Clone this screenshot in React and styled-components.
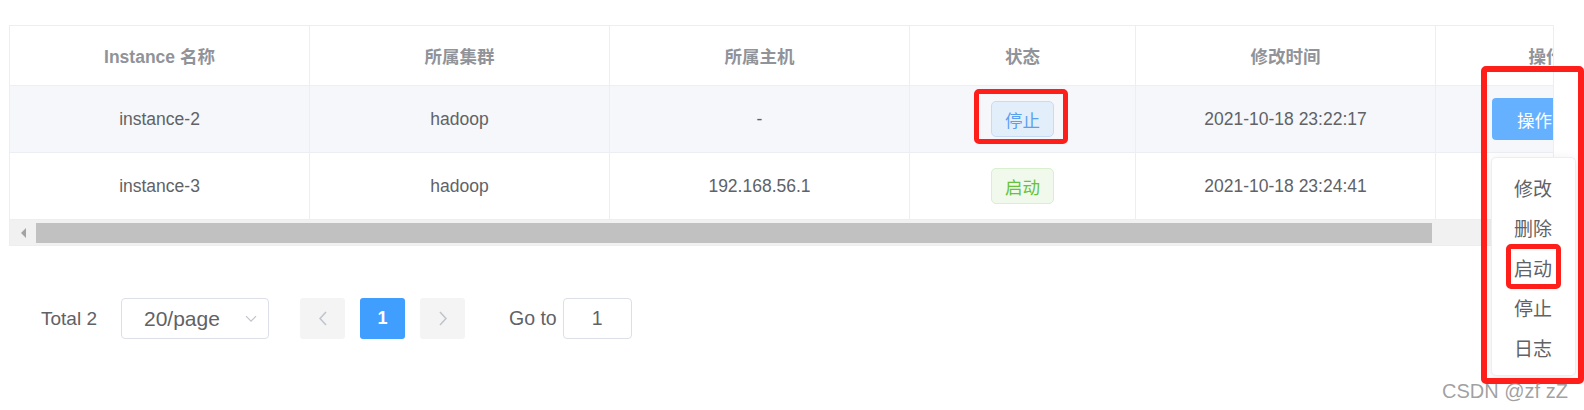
import React from 'react';
import styled, { createGlobalStyle } from 'styled-components';

const columns = [
  { key: 'name', title: 'Instance 名称', width: 300 },
  { key: 'cluster', title: '所属集群', width: 300 },
  { key: 'host', title: '所属主机', width: 300 },
  { key: 'status', title: '状态', width: 226 },
  { key: 'time', title: '修改时间', width: 300 },
  { key: 'op', title: '操作', width: 221 },
];

const rows = [
  { name: 'instance-2', cluster: 'hadoop', host: '-', status: 'stop', time: '2021-10-18 23:22:17', hover: true },
  { name: 'instance-3', cluster: 'hadoop', host: '192.168.56.1', status: 'run', time: '2021-10-18 23:24:41' },
];

const menuItems = ['修改', '删除', '启动', '停止', '日志'];

function ChevronDown({ size = 12 }) {
  return (
    <svg width={size} height={size * 0.6} viewBox="0 0 12 7" fill="none">
      <polyline points="1,1 6,6 11,1" stroke="currentColor" strokeWidth="1.2" />
    </svg>
  );
}

function Chevron({ dir }) {
  const pts = dir === 'left' ? '7,1 1,7.5 7,14' : '1,1 7,7.5 1,14';
  return (
    <svg width="8" height="15" viewBox="0 0 8 15" fill="none">
      <polyline points={pts} stroke="currentColor" strokeWidth="1.6" />
    </svg>
  );
}

function App() {
  return (
    <Page>
      <GlobalStyle />
      <TableWrap>
        <Grid>
          {columns.map((c) => (
            <HeadCell key={c.key}>{c.title}</HeadCell>
          ))}
          {rows.map((r) => (
            <React.Fragment key={r.name}>
              <Cell $hover={r.hover}>{r.name}</Cell>
              <Cell $hover={r.hover}>{r.cluster}</Cell>
              <Cell $hover={r.hover}>{r.host}</Cell>
              <Cell $hover={r.hover}>
                <Tag $kind={r.status}>{r.status === 'stop' ? '停止' : '启动'}</Tag>
              </Cell>
              <Cell $hover={r.hover}>{r.time}</Cell>
              <Cell $hover={r.hover}>
                {/* 두 번째 줄 버튼은 드롭다운에 가려짐 */}
                {r.hover && (
                  <OpButton>
                    操作 <ChevronDown size={13} />
                  </OpButton>
                )}
              </Cell>
            </React.Fragment>
          ))}
        </Grid>
        <ScrollBar>
          <ScrollArrow />
          <ScrollThumb />
        </ScrollBar>
      </TableWrap>

      <Pagination>
        <Total>Total 2</Total>
        <Select>
          <span>20/page</span>
          <SelectArrow><ChevronDown /></SelectArrow>
        </Select>
        <Pager>
          <PageBtn><Chevron dir="left" /></PageBtn>
          <PageBtn $active>1</PageBtn>
          <PageBtn><Chevron dir="right" /></PageBtn>
        </Pager>
        <Jumper>
          <span>Go to</span>
          <JumpInput>1</JumpInput>
        </Jumper>
      </Pagination>

      <Menu>
        {menuItems.map((m) => (
          <MenuItem key={m}>{m}</MenuItem>
        ))}
      </Menu>

      <Mark $l={1481} $t={66} $w={103} $h={318} $b={6} />
      <Mark $l={1506} $t={244} $w={55} $h={45} $b={5} />
      <Mark $l={974} $t={89} $w={94} $h={55} $b={5} />

      <Watermark>CSDN @zf zZ</Watermark>
    </Page>
  );
}

const GlobalStyle = createGlobalStyle`
  body {
    margin: 0;
    background: #fff;
    font-family: "Liberation Sans", Arial, "Noto Sans CJK SC", sans-serif;
  }
`;

const Page = styled.div`
  position: relative;
  width: 1584px;
  height: 410px;
  padding: 25px 0 0 9px;
  box-sizing: border-box;
  overflow: hidden;
`;

const TableWrap = styled.div`
  width: 1545px;
  border: 1px solid #ebeef5;
  box-sizing: border-box;
  overflow: hidden;
`;

const Grid = styled.div`
  display: grid;
  grid-template-columns: ${columns.map((c) => c.width + 'px').join(' ')};
  width: max-content;
`;

const HeadCell = styled.div`
  height: 60px;
  box-sizing: border-box;
  display: flex;
  align-items: center;
  justify-content: center;
  white-space: nowrap;
  border-right: 1px solid #ebeef5;
  border-bottom: 1px solid #ebeef5;
  font-size: 17.5px;
  font-weight: bold;
  color: #909399;
`;

const Cell = styled.div`
  height: 67px;
  box-sizing: border-box;
  display: flex;
  align-items: center;
  justify-content: center;
  border-right: 1px solid #ebeef5;
  border-bottom: 1px solid #ebeef5;
  background: ${(p) => (p.$hover ? '#f5f7fa' : '#fff')};
  font-size: 17.5px;
  color: #606266;
`;

const Tag = styled.span`
  display: inline-flex;
  align-items: center;
  height: 36px;
  padding: 0 13px;
  box-sizing: border-box;
  border-radius: 5px;
  font-size: 17.5px;
  border: 1px solid ${(p) => (p.$kind === 'stop' ? '#c6dcf5' : '#d9efcd')};
  background: ${(p) => (p.$kind === 'stop' ? '#e3eefb' : '#f0f9eb')};
  color: ${(p) => (p.$kind === 'stop' ? '#5b9ff0' : '#67c23a')};
`;

const OpButton = styled.button`
  display: inline-flex;
  align-items: center;
  gap: 6px;
  height: 42px;
  width: 108px;
  padding: 0 0 0 25px;
  box-sizing: border-box;
  border: none;
  border-radius: 4px;
  background: #66b1ff;
  color: #fff;
  font-family: inherit;
  font-size: 17.5px;
  white-space: nowrap;
`;

const ScrollBar = styled.div`
  display: flex;
  align-items: center;
  height: 25px;
  background: #f1f1f1;
`;

const ScrollArrow = styled.div`
  width: 26px;
  display: flex;
  justify-content: center;
  &::before {
    content: '';
    border-style: solid;
    border-width: 5.5px 5px 5.5px 0;
    border-color: transparent #a3a3a3 transparent transparent;
  }
`;

const ScrollThumb = styled.div`
  width: 1396px;
  height: 20px;
  background: #c1c1c1;
`;

const Pagination = styled.div`
  display: flex;
  align-items: center;
  height: 41px;
  margin: 52px 0 0 32px;
  color: #606266;
`;

const Total = styled.span`
  width: 56px;
  margin-right: 24px;
  font-size: 19px;
  white-space: nowrap;
`;

const Select = styled.div`
  position: relative;
  width: 148px;
  height: 41px;
  box-sizing: border-box;
  border: 1px solid #dcdfe6;
  border-radius: 4px;
  display: flex;
  align-items: center;
  padding-left: 22px;
  font-size: 21px;
  color: #606266;
`;

const SelectArrow = styled.span`
  position: absolute;
  right: 11px;
  top: 16px;
  color: #c0c4cc;
  display: flex;
`;

const Pager = styled.div`
  display: flex;
  gap: 15px;
  margin-left: 31px;
`;

const PageBtn = styled.div`
  width: 45px;
  height: 41px;
  border-radius: 3px;
  display: flex;
  align-items: center;
  justify-content: center;
  background: ${(p) => (p.$active ? '#409eff' : '#f4f4f5')};
  color: ${(p) => (p.$active ? '#fff' : '#c0c4cc')};
  font-weight: bold;
  font-size: 18px;
`;

const Jumper = styled.div`
  display: flex;
  align-items: center;
  gap: 6px;
  margin-left: 44px;
  font-size: 19.5px;
`;

const JumpInput = styled.div`
  width: 69px;
  height: 41px;
  box-sizing: border-box;
  border: 1px solid #dcdfe6;
  border-radius: 4px;
  display: flex;
  align-items: center;
  justify-content: center;
`;

const Menu = styled.ul`
  position: absolute;
  left: 1491px;
  top: 157px;
  width: 85px;
  height: 219px;
  box-sizing: border-box;
  margin: 0;
  padding: 10px 0 0;
  list-style: none;
  background: #fff;
  border: 1px solid #ebeef5;
  border-radius: 5px;
  box-shadow: 0 2px 12px rgba(0, 0, 0, 0.08);
`;

const MenuItem = styled.li`
  height: 40px;
  line-height: 40px;
  padding: 0 22px;
  font-size: 19px;
  color: #606266;
  font-family: "Noto Sans CJK SC", sans-serif;
  white-space: nowrap;
`;

const Mark = styled.div`
  position: absolute;
  left: ${(p) => p.$l}px;
  top: ${(p) => p.$t}px;
  width: ${(p) => p.$w}px;
  height: ${(p) => p.$h}px;
  box-sizing: border-box;
  border: ${(p) => p.$b}px solid #fe1f1a;
  border-radius: 5px;
  pointer-events: none;
`;

const Watermark = styled.div`
  position: absolute;
  left: 1442px;
  top: 380px;
  font-size: 20px;
  color: rgba(130, 130, 130, 0.75);
  white-space: nowrap;
`;

export default App;
